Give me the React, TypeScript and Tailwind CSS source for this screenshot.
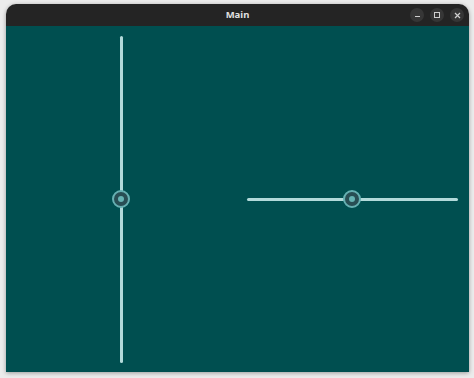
const Handle = () => (
  <div className="absolute w-[18px] h-[18px] rounded-full border-2 border-[#66b0b2] bg-[#284e54] flex items-center justify-center">
    <div className="w-[6px] h-[6px] rounded-full bg-[#66b3b3]" />
  </div>
);

export default function App() {
  return (
    <div className="w-[474px] h-[378px] bg-[#ececec] pt-[4px] pl-[6px]" style={{ fontFamily: "Ubuntu, 'Noto Sans', sans-serif" }}>
      <div className="w-[463px] h-[368px] rounded-t-[10px] overflow-hidden flex flex-col shadow-[0_1px_4px_rgba(0,0,0,0.35)]">
        {/* title bar */}
        <div className="h-[22px] bg-[#242424] relative flex items-center justify-center">
          <span className="text-[9.5px] font-bold text-[#e0e0e0]" style={{ fontFamily: "'Noto Sans', sans-serif" }}>Main</span>
          <div className="absolute right-[5px] top-[4px] flex gap-[6px]">
            <div className="w-[14px] h-[14px] rounded-full bg-[#363636] flex items-center justify-center">
              <div className="w-[5px] h-[1px] bg-[#cfcfcf] mt-[2px]" />
            </div>
            <div className="w-[14px] h-[14px] rounded-full bg-[#363636] flex items-center justify-center">
              <div className="w-[6px] h-[6px] border border-[#cfcfcf]" />
            </div>
            <div className="w-[14px] h-[14px] rounded-full bg-[#363636] flex items-center justify-center">
              <svg width="7" height="7" viewBox="0 0 7 7">
                <path d="M1 1L6 6M6 1L1 6" stroke="#cfcfcf" strokeWidth="1.2" />
              </svg>
            </div>
          </div>
        </div>
        {/* content */}
        <div className="flex-1 bg-[#004f50] relative">
          {/* vertical slider */}
          <div className="absolute left-[114px] top-[10px] w-[3px] h-[327px] bg-[#b2dada] rounded-full" />
          <div className="absolute left-[106px] top-[164px]">
            <Handle />
          </div>
          {/* horizontal slider */}
          <div className="absolute left-[241px] top-[172px] w-[211px] h-[3px] bg-[#b2dada] rounded-full" />
          <div className="absolute left-[337px] top-[164px]">
            <Handle />
          </div>
        </div>
      </div>
    </div>
  );
}
